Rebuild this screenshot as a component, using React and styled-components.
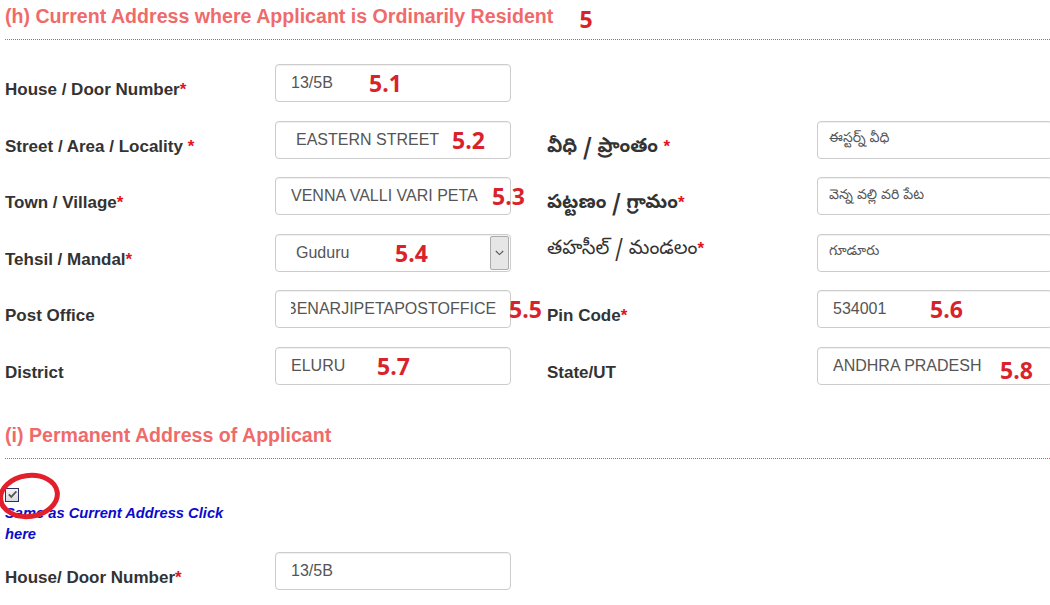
import React, { useEffect, useRef } from "react";
import styled, { createGlobalStyle } from "styled-components";

const GlobalStyle = createGlobalStyle`
    html, body {
        margin: 0;
        padding: 0;
        background: #ffffff;
    }
    * {
        box-sizing: border-box;
    }
`;

const TELUGU = `"Noto Sans Telugu", "Noto Sans", "DejaVu Sans", sans-serif`;

const currentRows = [
    {
        left: { label: "House / Door Number", req: true, value: "13/5B", tag: "5.1", tagX: 94 },
    },
    {
        left: { label: "Street / Area / Locality ", req: true, value: "EASTERN STREET", inset: 20, tag: "5.2", tagX: 177 },
        right: { label: "వీధి / ప్రాంతం ", req: true, telugu: true, value: "ఈస్టర్న్ వీధి", inset: 11 },
    },
    {
        left: { label: "Town / Village", req: true, value: "VENNA VALLI VARI PETA", tag: "5.3", tagX: 217 },
        right: { label: "పట్టణం / గ్రామం", req: true, telugu: true, value: "వెన్న వల్లి వరి పేట", inset: 11 },
    },
    {
        left: { label: "Tehsil / Mandal", req: true, value: "Guduru", select: true, inset: 20, tag: "5.4", tagX: 120 },
        right: { label: "తహసీల్ / మండలం", req: true, telugu: true, plain: true, value: "గూడూరు", inset: 11 },
    },
    {
        left: { label: "Post Office", value: "BENARJIPETAPOSTOFFICE", scrolled: true, tag: "5.5", tagX: 234 },
        right: { label: "Pin Code", req: true, value: "534001", tag: "5.6", tagX: 113 },
    },
    {
        left: { label: "District", value: "ELURU", tag: "5.7", tagX: 102 },
        right: { label: "State/UT", value: "ANDHRA PRADESH", tag: "5.8", tagX: 183, tagY: 4 },
    },
];

function Chevron() {
    return (
        <svg width="9" height="6" viewBox="0 0 9 6">
            <path d="M0.8 1 L4.5 4.6 L8.2 1" fill="none" stroke="#555" strokeWidth="1.1" />
        </svg>
    );
}

function FieldPair({ item }) {
    const ref = useRef(null);

    useEffect(() => {
        if (item.scrolled && ref.current) ref.current.scrollLeft = 9999;
    }, [item.scrolled]);

    return (
        <Pair>
            <Label $plain={item.plain} $telugu={item.telugu}>
                {item.label}
                {item.req && <Star>*</Star>}
            </Label>
            <Field>
                {item.select ? (
                    <SelectBox $inset={item.inset}>
                        <span>{item.value}</span>
                        <SelectButton>
                            <Chevron />
                        </SelectButton>
                    </SelectBox>
                ) : (
                    <Input
                        ref={ref}
                        readOnly
                        value={item.value}
                        $inset={item.inset}
                        $telugu={item.telugu}
                    />
                )}
                {item.tag && (
                    <Tag $x={item.tagX} $y={item.tagY || 0}>
                        {item.tag}
                    </Tag>
                )}
            </Field>
        </Pair>
    );
}

export default function App() {
    return (
        <>
            <GlobalStyle />
            <Page>
                <SectionHead>
                    <SectionTitle>(h) Current Address where Applicant is Ordinarily Resident</SectionTitle>
                    <HeadTag>5</HeadTag>
                </SectionHead>

                <Rows>
                    {currentRows.map((row, i) => (
                        <Row key={i}>
                            <FieldPair item={row.left} />
                            {row.right && <FieldPair item={row.right} />}
                        </Row>
                    ))}
                </Rows>

                <SectionHead $gap>
                    <SectionTitle>(i) Permanent Address of Applicant</SectionTitle>
                </SectionHead>

                <SameBlock>
                    <Ring width="66" height="50" viewBox="0 0 66 50">
                        <ellipse
                            cx="33"
                            cy="24"
                            rx="28.5"
                            ry="20.5"
                            fill="none"
                            stroke="#e2202b"
                            strokeWidth="5"
                            transform="rotate(-8 33 24)"
                        />
                    </Ring>
                    <CheckBox>
                        <svg width="11" height="11" viewBox="0 0 11 11">
                            <path d="M1.8 5.4 L4.3 7.9 L9.4 2.4" fill="none" stroke="#555" strokeWidth="1.7" />
                        </svg>
                    </CheckBox>
                    <SameLink href="#">Same as Current Address Click here</SameLink>
                </SameBlock>

                <Rows $top={7}>
                    <Row>
                        <FieldPair item={{ label: "House/ Door Number", req: true, value: "13/5B" }} />
                    </Row>
                </Rows>
            </Page>
        </>
    );
}

const Page = styled.div`
    width: 1050px;
    height: 605px;
    overflow: hidden;
    padding: 0 5px;
    font-family: "Liberation Sans", Arial, sans-serif;
`;

const SectionHead = styled.div`
    display: flex;
    align-items: center;
    height: 40px;
    padding: 1px 0 7px;
    margin-top: ${(p) => (p.$gap ? "34px" : "0")};
    border-bottom: 1px dotted #b06a6a;
    width: 1045px;
`;

const SectionTitle = styled.h3`
    margin: 0;
    font-size: 19.6px;
    font-weight: 700;
    color: #ef6b6b;
    white-space: nowrap;
`;

const HeadTag = styled.span`
    margin-left: 26px;
    margin-top: 4px;
    font-family: "Open Sans", sans-serif;
    font-weight: 700;
    font-size: 23px;
    color: #d8232b;
`;

const Rows = styled.div`
    display: flex;
    flex-direction: column;
    gap: 18.5px;
    margin-top: ${(p) => (p.$top !== undefined ? p.$top : 24)}px;
`;

const Row = styled.div`
    display: flex;
    gap: 36px;
`;

const Pair = styled.div`
    display: grid;
    grid-template-columns: 270px 236px;
    align-items: start;
    flex-shrink: 0;
`;

const Label = styled.label`
    padding-top: ${(p) => (p.$plain ? "4px" : "15px")};
    line-height: 22px;
    font-family: ${(p) => (p.$telugu ? TELUGU : `"Liberation Sans", Arial, sans-serif`)};
    font-size: ${(p) => (p.$telugu ? "19.5px" : "17px")};
    font-weight: ${(p) => (p.$plain ? 400 : 700)};
    color: #333333;
    white-space: nowrap;
`;

const Star = styled.span`
    color: #e3141b;
    font-family: "Liberation Sans", Arial, sans-serif;
    font-size: 17px;
    font-weight: 700;
`;

const Field = styled.div`
    position: relative;
    width: 236px;
    height: 38px;
`;

const Input = styled.input`
    display: block;
    width: 100%;
    height: 100%;
    margin: 0;
    border: 1px solid #cccccc;
    border-radius: 4px;
    padding: 0 14px 0 ${(p) => p.$inset || 15}px;
    background: #ffffff;
    box-shadow: inset 0 1px 1px rgba(0, 0, 0, 0.06);
    font-family: ${(p) => (p.$telugu ? TELUGU : `"Liberation Sans", Arial, sans-serif`)};
    font-size: ${(p) => (p.$telugu ? "14px" : "16px")};
    color: #555555;
    outline: none;
`;

const SelectBox = styled.div`
    display: flex;
    align-items: center;
    width: 100%;
    height: 100%;
    padding: 1px 1px 1px ${(p) => p.$inset || 15}px;
    border: 1px solid #cccccc;
    border-radius: 4px;
    background: #ffffff;
    box-shadow: inset 0 1px 1px rgba(0, 0, 0, 0.06);
    font-size: 16px;
    color: #555555;
`;

const SelectButton = styled.span`
    display: flex;
    align-items: center;
    justify-content: center;
    align-self: stretch;
    margin-left: auto;
    width: 19px;
    border: 1px solid #ababab;
    border-radius: 2px;
    background: #e6e6e6;
`;

const Tag = styled.span`
    position: absolute;
    left: ${(p) => p.$x}px;
    top: 50%;
    transform: translateY(calc(-50% + ${(p) => p.$y}px));
    font-family: "Open Sans", sans-serif;
    font-weight: 700;
    font-size: 23px;
    line-height: 1;
    color: #d8232b;
    pointer-events: none;
    white-space: nowrap;
`;

const SameBlock = styled.div`
    position: relative;
    margin-top: 29px;
`;

const Ring = styled.svg`
    position: absolute;
    left: -9px;
    top: -16px;
    pointer-events: none;
`;

const CheckBox = styled.span`
    display: flex;
    align-items: center;
    justify-content: center;
    width: 14px;
    height: 14px;
    border: 1px solid #2c2c66;
    background: linear-gradient(#f4f4f4, #d8d8e0);
`;

const SameLink = styled.a`
    display: block;
    width: 230px;
    margin-top: 1px;
    font-size: 14.7px;
    font-weight: 700;
    font-style: italic;
    line-height: 21px;
    color: #0b0bcc;
    text-decoration: none;
`;
